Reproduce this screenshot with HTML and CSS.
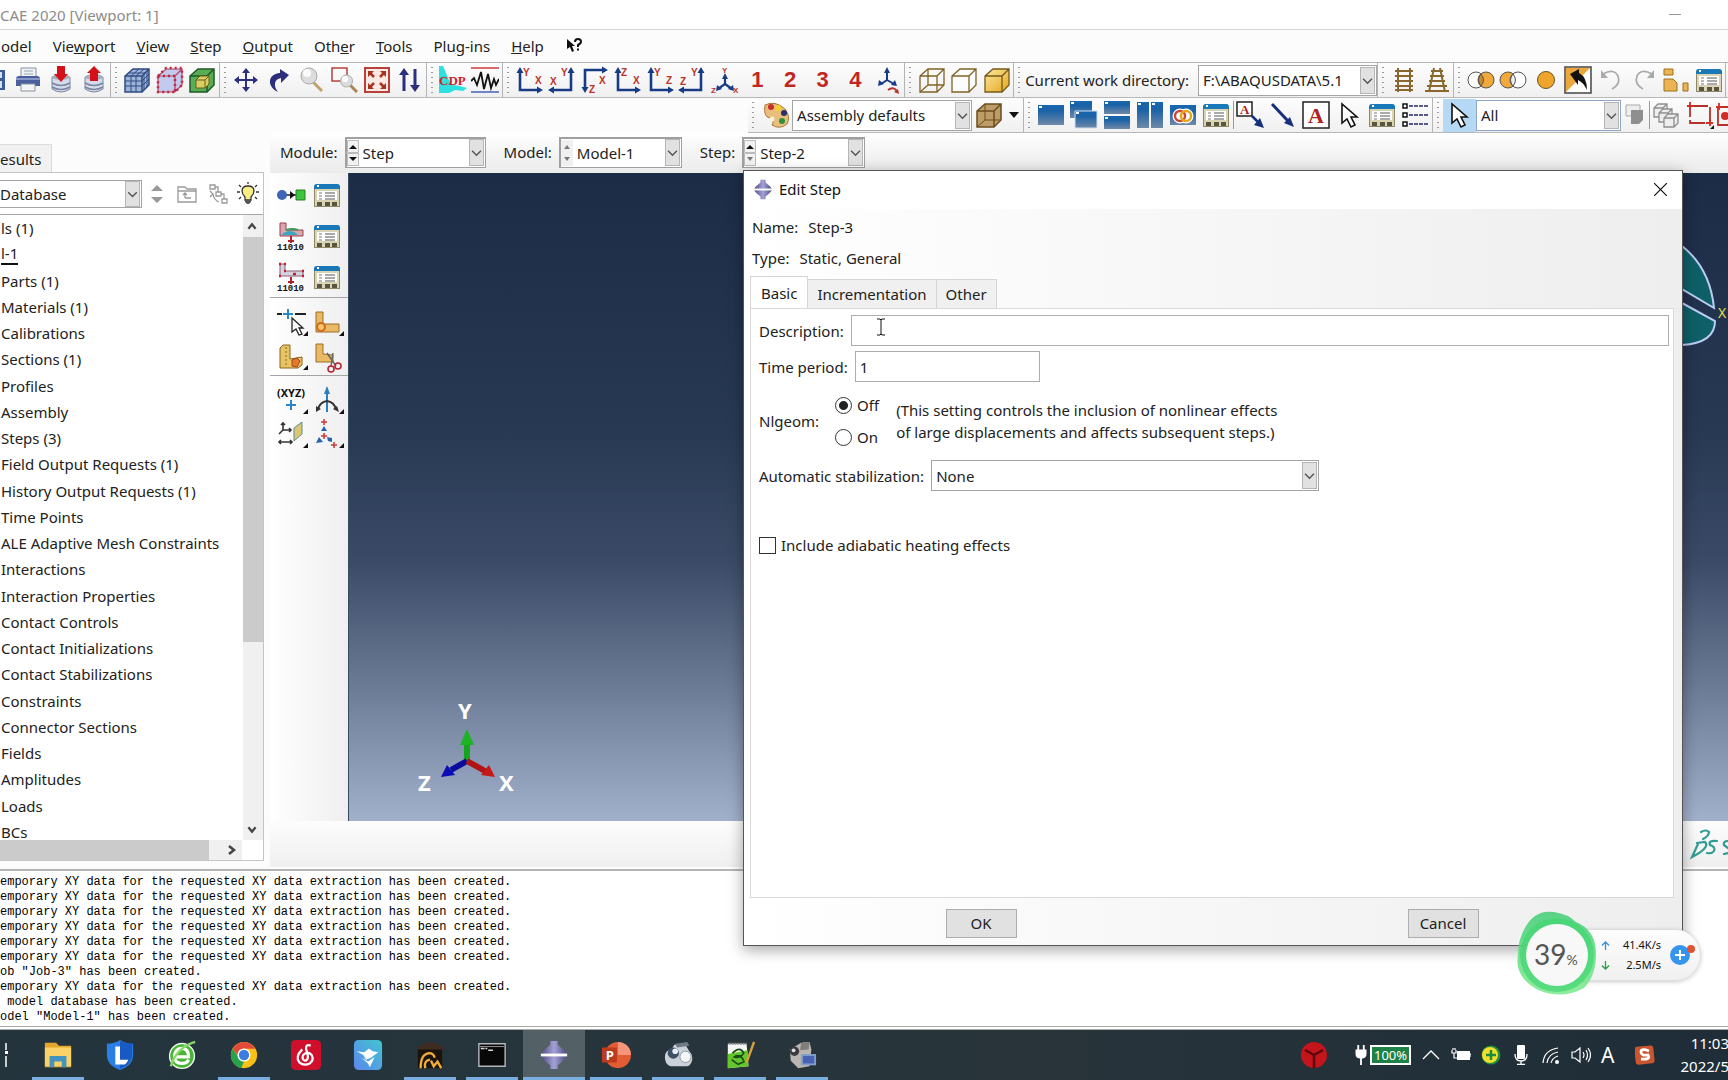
FILE: index.html
```html
<!DOCTYPE html>
<html lang="en">
<head>
    <meta charset="UTF-8">
    <meta name="viewport" content="width=device-width, initial-scale=1.0">
    <title>CAE 2020 [Viewport: 1]</title>
    <link rel="stylesheet" href="styles.css">
</head>
<body>

    <!-- Shared icons -->
    <svg class="sprite" width="0" height="0">
        <linearGradient id="g-blue" x1="0" y1="0" x2="0" y2="1"><stop offset="0" stop-color="#1767b0"/><stop offset=".3" stop-color="#1b62a6"/><stop offset="1" stop-color="#6f89a8"/></linearGradient>
        <linearGradient id="g-gold" x1="0" y1="0" x2="1" y2="1"><stop offset="0" stop-color="#fbe9a0"/><stop offset="1" stop-color="#e5a61c"/></linearGradient>
        <linearGradient id="g-purple" x1="0" x2="1"><stop offset="0" stop-color="#4c4a80"/><stop offset=".5" stop-color="#a3a1d6"/><stop offset="1" stop-color="#4c4a80"/></linearGradient>
        <symbol id="i-chevron" viewBox="0 0 14 28"><path d="M2 12l5 5 5-5" fill="none" stroke="#555" stroke-width="1.6"/></symbol>
        <symbol id="i-table" viewBox="0 0 28 28">
            <path d="M1 7q0-4 4-4h18q4 0 4 4v19H1z" fill="#8e8768"/>
            <path d="M2 8h24v17H2z" fill="#d9d4b4"/><path d="M1 8V6q0-3 3-3h20q3 0 3 3v2z" fill="#1878b8"/>
            <path d="M4 5h2" stroke="#fff" stroke-width="2"/><path d="M4 10h20v9H4z" fill="#fff"/>
            <path d="M6 12h3M6 15h3M6 18h3" stroke="#777"/><path d="M12 12h10M12 15h10M12 18h10" stroke="#555"/>
            <path d="M4 21h5v4H4zM12 21h5v4h-5zM19 21h5v4h-5z" fill="#5a5540"/>
        </symbol>
        <symbol id="i-arrow" viewBox="0 0 28 28"><path d="M7 3v19l5-4 4 8 4-2-4-8h6z" fill="#fff" stroke="#111" stroke-width="1.6"/></symbol>
        <symbol id="i-abaqus" viewBox="0 0 28 32">
            <path d="M10 1h8v4l6 5q4 4 4 6t-4 6l-6 5v4h-8v-4l-6-5q-4-4-4-6t4-6l6-5z" fill="url(#g-purple)"/><path d="M0 14.500h28v3H0z" fill="#fff"/>
        </symbol>
        <symbol id="i-db" viewBox="0 0 28 28">
            <path d="M5 11v12q9 6 18 0V11z" fill="#d4dcec" stroke="#7a86a0"/><path d="M5 17q9 5 18 0M5 21q9 5 18 0" fill="none" stroke="#7a86a0" stroke-width="1.500"/><ellipse cx="14" cy="11" rx="9" ry="3" fill="#a9adbb"/>
        </symbol>
        <symbol id="i-cube" viewBox="0 0 28 28"><path d="M2 10l8-7h16v16l-7 7H2zM2 10h17v16M19 10l7-7"/></symbol>
        <symbol id="i-axes" viewBox="0 0 28 28"><path d="M5 5v19h19" fill="none" stroke="#173c85" stroke-width="2.600"/><path d="M5 1L1.500 7h7zM28 24l-6-3.500v7z" fill="#173c85"/></symbol>
        <symbol id="i-corner" viewBox="0 0 6 6"><path d="M6 0v6H0z" fill="#111"/></symbol>
    </svg>

    <div class="window">
        <header class="title-bar">
            <span>CAE 2020 [Viewport: 1]</span>
            <button class="minimize" aria-label="Minimize"></button>
        </header>

        <nav class="menu-bar">
            <a href="#">odel</a>
            <a href="#">Vie<u>w</u>port</a>
            <a href="#"><u>V</u>iew</a>
            <a href="#"><u>S</u>tep</a>
            <a href="#"><u>O</u>utput</a>
            <a href="#">Oth<u>e</u>r</a>
            <a href="#"><u>T</u>ools</a>
            <a href="#">Plu<u>g</u>-ins</a>
            <a href="#"><u>H</u>elp</a>
            <svg class="help-cursor" viewBox="0 0 18 18"><path d="M2 2v10l3-2 2 5 2-1-2-5h3z" fill="#111"/><path d="M10 5q0-3 3-3t3 2.500q0 2-3 3.500v2M13 11.500v2" fill="none" stroke="#111" stroke-width="2"/></svg>
        </nav>

        <div class="toolbar toolbar-main">
            <button class="tool tool-cut" aria-label="Save"><svg viewBox="0 0 12 28"><path d="M0 4h5v20H0z" fill="#3c5a96"/><path d="M0 6h2v6H0zM0 15h2v7H0z" fill="#d5dff0"/></svg></button>
            <button class="tool" aria-label="Print"><svg viewBox="0 0 28 28"><path d="M7 2h15v9H7z" fill="#eef1f5" stroke="#8a93a5"/><path d="M10 5h9M10 8h9" stroke="#9aa"/><path d="M2 13q0-3 3-3h18q3 0 3 3v7H2z" fill="#4b5f9e"/><path d="M2 13h24" stroke="#8797c9" stroke-width="2"/><path d="M7 18h14v7H7z" fill="#f4f4f4" stroke="#8a93a5"/></svg></button>
            <button class="tool" aria-label="Import"><svg viewBox="0 0 28 28"><use href="#i-db"/><path d="M10 0h8v8h3l-7 8-7-8h3z" fill="#d4111b"/></svg></button>
            <button class="tool" aria-label="Export"><svg viewBox="0 0 28 28"><use href="#i-db"/><path d="M14 0l7 7h-3v8h-8V7H7z" fill="#d4111b"/></svg></button>
            <span class="grip"></span>
            <button class="tool" aria-label="Mesh"><svg viewBox="0 0 28 28"><use href="#i-cube" fill="#9db4da" stroke="#2f4a80" stroke-width="1.500"/><path d="M8 10v16M13 10v16M2 15h17l7-7M2 20h17l7-7M8 10l8-7M13 10l8-7M21 8v16M24 5v16M6 7h17" fill="none" stroke="#2f4a80"/></svg></button>
            <button class="tool" aria-label="Seeds"><svg viewBox="0 0 28 28"><use href="#i-cube" fill="#c2cbee" stroke="#b3405e" stroke-width="1.200"/><path d="M2 10l8-8h16v17l-7 7H2zM2 10h17v16" fill="none" stroke="#c02945" stroke-width="2.500" stroke-dasharray="2 3"/></svg></button>
            <button class="tool" aria-label="Part"><svg viewBox="0 0 28 28"><use href="#i-cube" fill="#58ad55" stroke="#1f5a26" stroke-width="1.500"/><path d="M8 14l4-4h9v8l-4 4H8zM8 14h9v8M17 14l4-4" fill="#d8cf62" stroke="#6b5d1b"/></svg></button>
            <span class="grip"></span>
            <button class="tool" aria-label="Pan"><svg viewBox="0 0 28 28"><path d="M14 5v18M5 14h18" stroke="#2b2f7c" stroke-width="2"/><path d="M14 2l-4 5h8zM14 26l-4-5h8zM2 14l5-4v8zM26 14l-5-4v8z" fill="#2b2f7c"/></svg></button>
            <button class="tool" aria-label="Rotate"><svg viewBox="0 0 28 28"><path d="M13 26C2 21 2 8 15 7V3l9 6-8 8v-5C9 13 8 20 13 26z" fill="#2b2f7c"/></svg></button>
            <button class="tool" aria-label="Magnify"><svg viewBox="0 0 28 28"><path d="M16 16l9 9" stroke="#c0a36a" stroke-width="3"/><circle cx="12" cy="10" r="8" fill="#dcdcdc" stroke="#aaa"/><circle cx="10" cy="7" r="4" fill="#fafafa"/></svg></button>
            <button class="tool" aria-label="Box zoom"><svg viewBox="0 0 28 28"><path d="M2 2h15v13H2z" fill="none" stroke="#b8413c" stroke-width="1.500"/><path d="M20 19l7 7" stroke="#a88755" stroke-width="3"/><circle cx="16.500" cy="15" r="6" fill="#ddd" stroke="#aaa"/><circle cx="15" cy="13" r="3" fill="#fff"/></svg></button>
            <button class="tool" aria-label="Fit view"><svg viewBox="0 0 28 28"><path d="M2 2h24v24H2z" fill="#fbe9e4" stroke="#b8413c" stroke-width="2"/><path d="M6 6l5 5M22 6l-5 5M6 22l5-5M22 22l-5-5" stroke="#a9331f" stroke-width="2.500"/><path d="M5 5h6l-6 6zM23 5h-6l6 6zM5 23h6l-6-6zM23 23h-6l6-6z" fill="#a9331f"/></svg></button>
            <button class="tool" aria-label="Cycle views"><svg viewBox="0 0 28 28"><path d="M9 25V6M20 3v19" stroke="#2b2f7c" stroke-width="3"/><path d="M9 2L4 9h10zM20 26l-5-7h10z" fill="#2b2f7c"/></svg></button>
            <span class="grip"></span>
            <button class="tool" aria-label="CDP"><svg viewBox="0 0 28 28"><path d="M0 0h4l8 19q7 0 16 3l-4 3-8-1-6 3H0z" fill="#2ee0df"/><text class="cdp" x="0" y="19">CDP</text></svg></button>
            <button class="tool" aria-label="Filter"><svg viewBox="0 0 28 28"><path d="M0 2h28" stroke="#cf3b3b" stroke-width="1.500"/><path d="M0 26h28" stroke="#4661b8" stroke-width="1.500"/><path d="M0 15l3-3 3 7 4-13 3 17 4-15 3 14 3-9 2 6 3-6" fill="none" stroke="#111" stroke-width="1.800"/></svg></button>
            <span class="grip"></span>
            <button class="tool" aria-label="XY front"><svg viewBox="0 0 28 28"><use href="#i-axes"/><text class="axis" x="8" y="10">Y</text><text class="axis" x="20" y="18">X</text></svg></button>
            <button class="tool" aria-label="XY back"><svg viewBox="0 0 28 28"><use href="#i-axes" transform="matrix(-1 0 0 1 28 0)"/><text class="axis" x="13" y="10">Y</text><text class="axis" x="2" y="19">X</text></svg></button>
            <button class="tool" aria-label="XZ top"><svg viewBox="0 0 28 28"><use href="#i-axes" transform="matrix(1 0 0 -1 0 28)"/><text class="axis" x="19" y="18">X</text><text class="axis" x="9" y="27">Z</text></svg></button>
            <button class="tool" aria-label="XZ bottom"><svg viewBox="0 0 28 28"><use href="#i-axes"/><text class="axis" x="8" y="10">Z</text><text class="axis" x="20" y="18">X</text></svg></button>
            <button class="tool" aria-label="YZ left"><svg viewBox="0 0 28 28"><use href="#i-axes"/><text class="axis" x="8" y="10">Y</text><text class="axis" x="20" y="18">Z</text></svg></button>
            <button class="tool" aria-label="YZ right"><svg viewBox="0 0 28 28"><use href="#i-axes" transform="matrix(-1 0 0 1 28 0)"/><text class="axis" x="13" y="10">Y</text><text class="axis" x="2" y="19">Z</text></svg></button>
            <button class="tool" aria-label="Isometric"><svg viewBox="0 0 28 28"><path d="M14 11v7l-7 5M14 18l7 5" fill="none" stroke="#173c85" stroke-width="2.200"/><path d="M14 7l-3 6h6zM5 25l1-6 5 4zM23 25l-1-6-5 4z" fill="#173c85"/><text class="axis-small" x="11" y="7">Y</text><text class="axis-small" x="0" y="27">Z</text><text class="axis-small" x="22" y="27">X</text></svg></button>
            <button class="tool view-number">1</button>
            <button class="tool view-number">2</button>
            <button class="tool view-number">3</button>
            <button class="tool view-number">4</button>
            <button class="tool" aria-label="Custom view"><svg viewBox="0 0 28 28"><path d="M13 6v8l-6 4M13 14l7 4" fill="none" stroke="#173c85" stroke-width="2"/><path d="M13 1l-3 6h6zM4 20l1-6 5 4zM23 20l-6-1 4-5z" fill="#173c85"/><path d="M14 24q5-4 9 1" fill="none" stroke="#b8332c" stroke-width="2"/><path d="M25 28l-5-2 4-3z" fill="#b8332c"/></svg></button>
            <span class="grip"></span>
            <button class="tool" aria-label="Wireframe"><svg viewBox="0 0 28 28"><use href="#i-cube" fill="none" stroke="#806225" stroke-width="1.300"/><path d="M10 3v16h16M10 19l-8 7" fill="none" stroke="#806225" stroke-width="1.300"/></svg></button>
            <button class="tool" aria-label="Hidden line"><svg viewBox="0 0 28 28"><use href="#i-cube" fill="#fcfcfc" stroke="#806225" stroke-width="1.300"/></svg></button>
            <button class="tool" aria-label="Shaded"><svg viewBox="0 0 28 28"><use href="#i-cube" fill="url(#g-gold)" stroke="#75591a" stroke-width="1.300"/></svg></button>
            <span class="grip"></span>
            <label class="toolbar-label" for="work-dir">Current work directory:</label>
            <span class="combo combo-dir"><select id="work-dir"><option>F:\ABAQUSDATA\5.1</option></select><svg class="combo-arrow"><use href="#i-chevron"/></svg></span>
            <span class="grip"></span>
            <button class="tool" aria-label="Parallel"><svg viewBox="0 0 28 28"><path d="M8 2v24M20 2v24M5 5h18M5 10h18M5 15h18M5 20h18M5 24h18" stroke="#8a672f" stroke-width="2"/></svg></button>
            <button class="tool" aria-label="Perspective"><svg viewBox="0 0 28 28"><path d="M11 2L6 26M17 2l5 24M8 5h12M7 10h14M6 15h16M4 20h20M2 25h24" stroke="#8a672f" stroke-width="2"/></svg></button>
            <span class="grip"></span>
            <button class="tool" aria-label="Union"><svg viewBox="0 0 28 28"><circle cx="9" cy="14" r="8" fill="#fff" stroke="#555"/><circle cx="19" cy="14" r="8" fill="#f0a93a" stroke="#555"/><path d="M14 8q5 6 0 12-5-6 0-12z" fill="#cd8a2a" stroke="#555"/></svg></button>
            <button class="tool" aria-label="Subtract"><svg viewBox="0 0 28 28"><circle cx="9" cy="14" r="8" fill="#f0a93a" stroke="#555"/><circle cx="19" cy="14" r="8" fill="#fff" stroke="#555"/><path d="M14 8q5 6 0 12-5-6 0-12z" fill="#eee" stroke="#555"/></svg></button>
            <button class="tool" aria-label="Only"><svg viewBox="0 0 28 28"><circle cx="14" cy="14" r="8.500" fill="#f0a42c" stroke="#6d5221"/></svg></button>
            <button class="tool" aria-label="Replace"><svg viewBox="0 0 28 28"><path d="M1 1h26v26H1z" fill="#fff" stroke="#444" stroke-width="1.500"/><path d="M2 2h24L2 26z" fill="#eda63a"/><path d="M6 8l9-5v4q8 4 8 17-4-8-9-10v5z" fill="#111"/></svg></button>
            <button class="tool" aria-label="Undo"><svg viewBox="0 0 28 28"><path d="M6 8q11-6 15 2 3 8-6 13" fill="none" stroke="#a9a9a9" stroke-width="1.700"/><path d="M4 4v8h7z" fill="#a9a9a9"/></svg></button>
            <button class="tool" aria-label="Redo"><svg viewBox="0 0 28 28"><path d="M22 8Q11 2 7 10q-3 8 6 13" fill="none" stroke="#a9a9a9" stroke-width="1.700"/><path d="M24 4v8h-7z" fill="#a9a9a9"/></svg></button>
            <button class="tool" aria-label="Display groups"><svg viewBox="0 0 28 28"><path d="M2 3h9v6H2zM2 13h9l4 4v8H2zM21 17h5v8h-5z" fill="#eab455" stroke="#9b701f"/></svg></button>
            <button class="tool" aria-label="Manager"><svg><use href="#i-table"/></svg></button>
            <span class="edge"></span>
        </div>

        <div class="toolbar toolbar-second">
            <span class="grip"></span>
            <button class="tool" aria-label="Color code"><svg viewBox="0 0 28 28"><path d="M3 4q10-5 20 4 6 8 2 15-7 6-15 1 3-5-2-7-7-1-5-13z" fill="#e9bd7c" stroke="#a8773a"/><circle cx="9" cy="6" r="3" fill="#c92f27"/><circle cx="16" cy="7" r="3" fill="#f2d32b"/><circle cx="22" cy="12" r="3" fill="#2b2f6a"/><circle cx="20" cy="20" r="3" fill="#2f8f3a"/><circle cx="10" cy="18" r="2.500" fill="#f8efd8"/></svg></button>
            <span class="combo combo-color"><select aria-label="Color mapping"><option>Assembly defaults</option></select><svg class="combo-arrow"><use href="#i-chevron"/></svg></span>
            <button class="tool" aria-label="Translucency"><svg viewBox="0 0 28 28"><use href="#i-cube" fill="#bd9c68" stroke="#6b4e1d" stroke-width="1.500"/><path d="M10 3v16h16M10 19l-8 7" fill="none" stroke="#6b4e1d"/></svg></button>
            <button class="tool-drop" aria-label="More"><svg viewBox="0 0 10 6"><path d="M0 0h10L5 6z" fill="#111"/></svg></button>
            <span class="grip"></span>
            <button class="tool" aria-label="Single viewport"><svg viewBox="0 0 28 28"><path d="M1 4h26v20H1z" fill="url(#g-blue)"/><path d="M2 6h3" stroke="#fff" stroke-width="2"/></svg></button>
            <button class="tool" aria-label="Cascade"><svg viewBox="0 0 28 28"><path d="M0 0h22v17H0z" fill="url(#g-blue)"/><path d="M5 10h22v17H5z" fill="url(#g-blue)" stroke="#cfe0ef"/><path d="M1 2h3M6 12h3" stroke="#fff" stroke-width="2"/></svg></button>
            <button class="tool" aria-label="Tile horizontally"><svg viewBox="0 0 28 28"><path d="M1 0h26v13H1z" fill="url(#g-blue)"/><path d="M1 15h26v13H1z" fill="url(#g-blue)"/><path d="M2 2h3M2 17h3" stroke="#fff" stroke-width="2"/></svg></button>
            <button class="tool" aria-label="Tile vertically"><svg viewBox="0 0 28 28"><path d="M1 1h12v26H1z" fill="url(#g-blue)"/><path d="M15 1h12v26H15z" fill="url(#g-blue)"/><path d="M2 3h3M16 3h3" stroke="#fff" stroke-width="2"/></svg></button>
            <button class="tool" aria-label="Link viewports"><svg viewBox="0 0 28 28"><path d="M1 4h26v20H1z" fill="url(#g-blue)"/><g fill="#fff" stroke="#fff" stroke-width="3"><circle cx="11" cy="15" r="6"/><circle cx="17" cy="15" r="6"/></g><circle cx="11" cy="15" r="5" fill="none" stroke="#c9483a" stroke-width="2.500"/><circle cx="17" cy="15" r="5" fill="none" stroke="#e5a61c" stroke-width="2.500"/></svg></button>
            <button class="tool" aria-label="Viewport manager"><svg><use href="#i-table"/></svg></button>
            <span class="divider"></span>
            <button class="tool" aria-label="Arrow text"><svg viewBox="0 0 28 28"><path d="M1 1h15v14H1z" fill="#fff" stroke="#222" stroke-width="1.500"/><text class="letter-small" x="4" y="13">A</text><path d="M16 15l7 7" stroke="#16307e" stroke-width="2.500"/><path d="M28 27l-10-3 6-7z" fill="#16307e"/></svg></button>
            <button class="tool" aria-label="Arrow"><svg viewBox="0 0 28 28"><path d="M3 3l16 17" stroke="#16307e" stroke-width="3"/><path d="M25 26l-10-4 6-6z" fill="#16307e"/></svg></button>
            <button class="tool" aria-label="Text"><svg viewBox="0 0 28 28"><path d="M1 1h26v26H1z" fill="#fff" stroke="#222" stroke-width="1.500"/><text class="letter" x="6" y="22">A</text></svg></button>
            <button class="tool" aria-label="Select annotation"><svg><use href="#i-arrow"/></svg></button>
            <button class="tool" aria-label="Annotation manager"><svg><use href="#i-table"/></svg></button>
            <button class="tool" aria-label="Annotation options"><svg viewBox="0 0 28 28"><path d="M2 3h4v4H2zM2 12h4v4H2zM2 21h4v4H2z" fill="#fff" stroke="#111" stroke-width="1.500"/><path d="M8 5h20M8 14h20M8 23h20" stroke="#222a6c" stroke-width="1.500" stroke-dasharray="4 1"/></svg></button>
            <span class="grip"></span>
            <button class="tool tool-active" aria-label="Select"><svg><use href="#i-arrow"/></svg></button>
            <span class="combo combo-filter"><select aria-label="Selection filter"><option>All</option></select><svg class="combo-arrow"><use href="#i-chevron"/></svg></span>
            <button class="tool tool-narrow" aria-label="Selection options"><svg viewBox="0 0 28 28"><path d="M5 4h14v11H5z" fill="#eee" stroke="#aaa"/><path d="M10 9h12v10l-4 4h-8z" fill="#8f8f8f"/></svg></button>
            <span class="divider"></span>
            <button class="tool" aria-label="Highlight"><svg viewBox="0 0 28 28"><g fill="#eee" stroke="#8f8f8f" stroke-width="1.300"><path d="M2 7l4-4h9v9l-4 4H2zM2 7h9v9M11 7l4-4"/><path d="M7 12l4-4h9v9l-4 4H7zM7 12h9v9M16 12l4-4"/><path d="M12 17l4-4h10v9l-4 4H12zM12 17h10v9M22 17l4-4"/></g></svg></button>
            <button class="tool" aria-label="Drag rectangle"><svg viewBox="0 0 28 28"><path d="M4 5h20v17H4z" fill="none" stroke="#b7312b" stroke-width="1.800" stroke-dasharray="18 3"/><path d="M1 5h7M4 1v7M20 22h7M24 18v7" stroke="#d12c26" stroke-width="1.800"/><path d="M28 24v4h-4z" fill="#111"/></svg></button>
            <button class="tool tool-cut" aria-label="Inside"><svg viewBox="0 0 12 28"><path d="M12 6H2v18h10" fill="none" stroke="#b7312b" stroke-width="1.800"/><path d="M0 6h6M3 2v7" stroke="#d12c26" stroke-width="1.800"/><ellipse cx="9" cy="15" rx="4" ry="4" fill="#d12c26"/></svg></button>
        </div>

        <div class="workspace">
            <aside class="side">
                <div class="side-tabs"><button class="side-tab">esults</button></div>
                <div class="side-body">
                    <div class="side-tools">
                        <span class="combo combo-db"><select aria-label="Database"><option>Database</option></select><svg class="combo-arrow"><use href="#i-chevron"/></svg></span>
                        <button class="side-tool" aria-label="Up or down"><svg viewBox="0 0 24 24"><path d="M6 9l6-6 6 6zM6 15l6 6 6-6z" fill="#999"/></svg></button>
                        <button class="side-tool" aria-label="Parent"><svg viewBox="0 0 24 24"><path d="M3 20V5h7l2 2h9v13zM3 9h18M10 16h6M10 16v-4M8 13l2-2 2 2" fill="none" stroke="#9a9a9a" stroke-width="1.300"/></svg></button>
                        <button class="side-tool" aria-label="Filter tree"><svg viewBox="0 0 24 24"><path d="M4 3h5v4H4zM10 10h5v4h-5zM16 17h5v4h-5zM9 5h3v5M15 12h3v5M4 9l3 3-3 3M7 12q1 6 6 8" fill="none" stroke="#9a9a9a" stroke-width="1.300"/></svg></button>
                        <button class="side-tool" aria-label="Hint"><svg viewBox="0 0 24 24"><path d="M9 15q-3-3-3-6 0-5 6-5t6 5q0 3-3 6v3H9z" fill="#f6ee84" stroke="#333" stroke-width="1.300"/><path d="M9 18h6v2l-2 2h-2l-2-2z" fill="#555"/><path d="M12 0v2M3 3l2 2M21 3l-2 2M1 10h3M23 10h-3M3 17l2-2M21 17l-2-2" stroke="#333" stroke-width="1.300"/></svg></button>
                    </div>
                    <div class="tree-area">
                        <ul class="tree">
                            <li>ls (1)</li>
                            <li><span class="current">l-1</span></li>
                            <li>Parts (1)</li>
                            <li>Materials (1)</li>
                            <li>Calibrations</li>
                            <li>Sections (1)</li>
                            <li>Profiles</li>
                            <li>Assembly</li>
                            <li>Steps (3)</li>
                            <li>Field Output Requests (1)</li>
                            <li>History Output Requests (1)</li>
                            <li>Time Points</li>
                            <li>ALE Adaptive Mesh Constraints</li>
                            <li>Interactions</li>
                            <li>Interaction Properties</li>
                            <li>Contact Controls</li>
                            <li>Contact Initializations</li>
                            <li>Contact Stabilizations</li>
                            <li>Constraints</li>
                            <li>Connector Sections</li>
                            <li>Fields</li>
                            <li>Amplitudes</li>
                            <li>Loads</li>
                            <li>BCs</li>
                        </ul>
                        <div class="scroll-v">
                            <svg viewBox="0 0 20 22"><path d="M6 14l4-5 4 5" fill="none" stroke="#444" stroke-width="2.500"/></svg>
                            <div class="thumb-v"></div>
                            <svg viewBox="0 0 20 22"><path d="M6 9l4 5 4-5" fill="none" stroke="#444" stroke-width="2.500"/></svg>
                        </div>
                    </div>
                    <div class="scroll-h">
                        <div class="thumb-h"></div>
                        <svg viewBox="0 0 20 20"><path d="M8 6l5 4-5 4" fill="none" stroke="#444" stroke-width="2.500"/></svg>
                    </div>
                </div>
            </aside>

            <main class="main">
                <div class="context-bar">
                    <label for="module">Module:</label>
                    <span class="combo combo-spin combo-module"><svg class="spin" viewBox="0 0 12 26"><path d="M.5.5h11v12H.5zM.5 13.500h11v12H.5z" fill="#f2f2f2" stroke="#bbb"/><path d="M2 9l4-4 4 4zM2 17l4 4 4-4z" fill="#111"/></svg><select id="module"><option>Step</option></select><svg class="combo-arrow"><use href="#i-chevron"/></svg></span>
                    <label for="model">Model:</label>
                    <span class="combo combo-spin combo-model"><svg class="spin" viewBox="0 0 12 26"><path d="M0 0h12v26H0z" fill="#f0f0f0"/><path d="M3 9l3-4 3 4zM3 17l3 4 3-4z" fill="#777"/></svg><select id="model"><option>Model-1</option></select><svg class="combo-arrow"><use href="#i-chevron"/></svg></span>
                    <label for="step">Step:</label>
                    <span class="combo combo-spin combo-model"><svg class="spin" viewBox="0 0 12 26"><path d="M.5.5h11v12H.5zM.5 13.500h11v12H.5z" fill="#f2f2f2" stroke="#bbb"/><path d="M2 9l4-4 4 4z" fill="#111"/><path d="M3 17l3 4 3-4z" fill="#777"/></svg><select id="step"><option>Step-2</option></select><svg class="combo-arrow"><use href="#i-chevron"/></svg></span>
                </div>

                <div class="canvas-row">
                    <div class="toolbox">
                        <div class="tool-grid tool-grid-wide">
                            <button aria-label="Create step"><svg viewBox="0 0 28 28"><path d="M5 14h16" stroke="#222" stroke-width="1.500"/><circle cx="5" cy="14" r="5" fill="#3f63b5"/><path d="M13 10l5 4-5 4z" fill="#111"/><path d="M19 9h9v10h-9z" fill="#3ec53c" stroke="#2b7d2a"/></svg></button>
                            <button aria-label="Step manager"><svg><use href="#i-table"/></svg></button>
                            <button aria-label="Create field output"><svg viewBox="0 0 28 28"><path d="M3 1h6v7h17v6H3z" fill="#d9a7ae" stroke="#99404c"/><path d="M4 13q9-8 17 0z" fill="#3aa6c6"/><path d="M9 8q7-2 12 0" stroke="#3f9a5a" stroke-width="2" fill="none"/><path d="M14 14v7M11 19h6" stroke="#b0202c" stroke-width="2"/><text class="bits" x="0" y="28">11010</text></svg></button>
                            <button aria-label="Field output manager"><svg><use href="#i-table"/></svg></button>
                            <button aria-label="Create history output"><svg viewBox="0 0 28 28"><path d="M3 1h5v7h18v5H3z" fill="#d3d3e2" stroke="#8a5f73"/><path d="M2 1h2M7 1h2M2 13h2M25 8h2M25 13h2M16 11h3M7 8h2" stroke="#c0202c" stroke-width="2.500"/><path d="M14 14v7M11 19h6" stroke="#b0202c" stroke-width="2"/><text class="bits" x="0" y="28">11010</text></svg></button>
                            <button aria-label="History output manager"><svg><use href="#i-table"/></svg></button>
                        </div>
                        <div class="tool-grid">
                            <button aria-label="Pick"><svg viewBox="0 0 28 28"><path d="M0 6h5M18 6h11" stroke="#222" stroke-width="2"/><path d="M6 6h10M11 1v10" stroke="#2a86c8" stroke-width="2"/><path d="M15 10v14l4-3 3 6 3-1-3-6h4z" fill="#fff" stroke="#222" stroke-width="1.300"/></svg><svg class="flyout"><use href="#i-corner"/></svg></button>
                            <button aria-label="Partition"><svg viewBox="0 0 28 28"><path d="M3 4h7v12h16v8H3z" fill="#e9b964" stroke="#9a6f28"/><circle cx="8" cy="19" r="4" fill="#f4c36a" stroke="#d06a1c" stroke-width="2"/></svg><svg class="flyout"><use href="#i-corner"/></svg></button>
                            <button aria-label="Cell"><svg viewBox="0 0 28 28"><path d="M3 6l3-3h7v14l12-2v8l-4 3H3z" fill="#e8c362" stroke="#8a6420"/><path d="M9 5v20" stroke="#8a6420" stroke-dasharray="2 2"/><path d="M15 18l5-2 3 3-3 6-5-1z" fill="#e27a2c" stroke="#a8441c"/></svg><svg class="flyout"><use href="#i-corner"/></svg></button>
                            <button aria-label="Cut"><svg viewBox="0 0 28 28"><path d="M3 2h7v10l10 1v7H3z" fill="#e9b964" stroke="#9a6f28"/><path d="M14 11l9 13M20 11l-2 13" stroke="#666" stroke-width="1.500"/><circle cx="25" cy="24" r="3" fill="none" stroke="#b8202c" stroke-width="1.500"/><circle cx="18" cy="27" r="3" fill="none" stroke="#b8202c" stroke-width="1.500"/></svg></button>
                        </div>
                        <div class="tool-grid">
                            <button aria-label="Datum point"><svg viewBox="0 0 28 28"><text class="xyz" x="0" y="11">(XYZ)</text><path d="M9 19h10M14 14v10" stroke="#2a86c8" stroke-width="2"/></svg><svg class="flyout"><use href="#i-corner"/></svg></button>
                            <button aria-label="Datum axis"><svg viewBox="0 0 28 28"><path d="M14 2v24" stroke="#2a7fc0" stroke-width="2"/><path d="M14 0l-3 8h6z" fill="#2a7fc0"/><path d="M14 15q-7 1-9 8M14 15q7 1 9 8" fill="none" stroke="#333" stroke-width="2"/><path d="M3 26v-6l5 3zM26 26l-6-3 4-3z" fill="#333"/></svg><svg class="flyout"><use href="#i-corner"/></svg></button>
                            <button aria-label="Datum plane"><svg viewBox="0 0 28 28"><path d="M6 3v7h8M6 10l-4 4M2 22h13M4 20l-2 2 2 2M13 20l2 2-2 2M12 8l2 2-2 2M4 5l2-2 2 2" fill="none" stroke="#333" stroke-width="1.600"/><path d="M17 8l8-6v12l-8 7z" fill="#ddc66e" stroke="#5b8a9a"/></svg><svg class="flyout"><use href="#i-corner"/></svg></button>
                            <button aria-label="Datum CSYS"><svg viewBox="0 0 28 28"><path d="M8 2h6M11 -1v6M8 16h6M11 13v6M18 25h6M21 22v6" stroke="#cf3636" stroke-width="1.500"/><path d="M8 11l3-5 3 5zM3 23l3-6 4 5zM15 21l-1-4 5 1v4z" fill="#2564ad"/></svg><svg class="flyout"><use href="#i-corner"/></svg></button>
                        </div>
                    </div>

                    <div class="viewport">
                        <svg class="triad" viewBox="0 0 110 100">
                            <path d="M54 64V44" stroke="#17a41d" stroke-width="6"/><path d="M54 32l-7 16h14z" fill="#1cb424"/>
                            <path d="M54 64l-16 9" stroke="#0a0c9c" stroke-width="6"/><path d="M28 80l6-12 8 10z" fill="#0a0cb4"/>
                            <path d="M54 64l18 10" stroke="#b01414" stroke-width="6"/><path d="M82 80l-6-12-8 10z" fill="#c81818"/>
                            <text x="45" y="22">Y</text><text x="5" y="94">Z</text><text x="86" y="94">X</text>
                        </svg>
                        <svg class="compass" viewBox="0 0 46 110">
                            <path d="M0 8q28 22 32 62L0 51z" fill="#0f5f68" stroke="#b9cdf3" stroke-width="2"/>
                            <path d="M0 65l33 18q0 22-33 24z" fill="#0f5f68" stroke="#b9cdf3" stroke-width="2"/>
                            <text x="36" y="80">X</text>
                        </svg>
                    </div>
                </div>

                <div class="prompt">
                    <svg class="logo" viewBox="0 0 40 32"><g fill="none" stroke="#2f9c94" stroke-width="2.200" stroke-linecap="round"><path d="M13 4q5-3 8 0 0 4-6 7M9 15l8-1q3 3-1 7-4 4-12 8l6-13"/><path d="M29 13q-9-1-7 4 6 2 4 6-2 3-7 2"/><path d="M40 13q-5 0-4 4l4 3M36 26l4-1"/></g></svg>
                </div>
            </main>
        </div>

        <div class="log">
            <p>emporary XY data for the requested XY data extraction has been created.</p>
            <p>emporary XY data for the requested XY data extraction has been created.</p>
            <p>emporary XY data for the requested XY data extraction has been created.</p>
            <p>emporary XY data for the requested XY data extraction has been created.</p>
            <p>emporary XY data for the requested XY data extraction has been created.</p>
            <p>emporary XY data for the requested XY data extraction has been created.</p>
            <p>ob "Job-3" has been created.</p>
            <p>emporary XY data for the requested XY data extraction has been created.</p>
            <p> model database has been created.</p>
            <p>odel "Model-1" has been created.</p>
        </div>
    </div>

    <form class="dialog">
        <div class="dialog-title">
            <svg class="dialog-icon"><use href="#i-abaqus"/></svg>
            <span>Edit Step</span>
            <button type="button" class="close" aria-label="Close"><svg viewBox="0 0 14 14"><path d="M0 0l14 14M14 0L0 14" stroke="#111" stroke-width="1.300"/></svg></button>
        </div>
        <div class="dialog-body">
            <div class="info"><span>Name:</span><span>Step-3</span></div>
            <div class="info"><span>Type:</span><span>Static, General</span></div>

            <div class="tabs">
                <button type="button" class="tab tab-on">Basic</button>
                <button type="button" class="tab">Incrementation</button>
                <button type="button" class="tab">Other</button>
            </div>

            <div class="panel">
                <div class="field">
                    <label for="description">Description:</label>
                    <input class="text-box text-wide" type="text" id="description">
                </div>
                <div class="field">
                    <label for="period">Time period:</label>
                    <input class="text-box" type="text" id="period" value="1">
                </div>
                <div class="field nlgeom">
                    <span>Nlgeom:</span>
                    <div class="radios">
                        <label><input type="radio" name="nlgeom" checked>Off</label>
                        <label><input type="radio" name="nlgeom">On</label>
                    </div>
                    <p class="note">(This setting controls the inclusion of nonlinear effects<br>of large displacements and affects subsequent steps.)</p>
                </div>
                <div class="field">
                    <label for="stabilization">Automatic stabilization:</label>
                    <span class="combo combo-stab"><select id="stabilization"><option>None</option></select><svg class="combo-arrow"><use href="#i-chevron"/></svg></span>
                </div>
                <label class="check"><input type="checkbox">Include adiabatic heating effects</label>
            </div>

            <div class="dialog-buttons">
                <button type="button">OK</button>
                <button type="button">Cancel</button>
            </div>
        </div>
        <svg class="ibeam" viewBox="0 0 8 18"><path d="M0 1h3l1 1 1-1h3M4 2v14M0 17h3l1-1 1 1h3" fill="none" stroke="#111"/></svg>
    </form>

    <!-- Memory / network widget -->
    <div class="meter">
        <div class="speeds">
            <div><svg viewBox="0 0 10 10"><path d="M5 10V1M1 5l4-4 4 4" fill="none" stroke="#3c93dd" stroke-width="1.500"/></svg><span>41.4K/s</span></div>
            <div><svg viewBox="0 0 10 10"><path d="M5 0v9M1 5l4 4 4-4" fill="none" stroke="#2fa04d" stroke-width="1.500"/></svg><span>2.5M/s</span></div>
        </div>
        <svg class="plus" viewBox="0 0 26 26"><circle cx="11" cy="13" r="10" fill="#3594ee"/><path d="M6 13h10M11 8v10" stroke="#fff" stroke-width="2"/><circle cx="22" cy="7" r="4" fill="#e2532f"/></svg>
        <div class="ball">
            <svg viewBox="0 0 84 86"><defs><linearGradient id="g-ball" x1="0" y1="0" x2="0" y2="1"><stop offset="0" stop-color="#3fcd74"/><stop offset="1" stop-color="#7bea8c"/></linearGradient></defs><path d="M8 25Q18 0 40 3q14 2 22 10 20 8 20 32 0 22-12 34-22 12-46 2Q0 68 4 46q0-12 4-21z" fill="url(#g-ball)" opacity=".85"/><circle cx="43" cy="46" r="37" fill="#42d671" opacity=".7"/><circle cx="43" cy="46" r="31" fill="#f7f8f7"/></svg>
            <span class="percent">39<small>%</small></span>
        </div>
    </div>

    <footer class="taskbar">
        <div class="apps">
            <button class="app-cut" aria-label="Task view"><svg viewBox="0 0 10 32"><path d="M6 4v7M6 17v11" stroke="#fff" stroke-width="1.500"/><path d="M5 12h3v3H5z" fill="#fff"/></svg></button>
            <button class="app running" aria-label="Explorer"><svg viewBox="0 0 32 32"><path d="M2 3h12l3 3h13v23H2z" fill="#e3a72e"/><path d="M2 8h28v20H2z" fill="#fad26a"/><path d="M7 29V17h18v12h-5v-6h-8v6z" fill="#4594bd"/></svg></button>
            <button class="app" aria-label="Lenovo"><svg viewBox="0 0 32 32"><path d="M16 0q6 4 14 4v12q0 11-14 16Q2 27 2 16V4q8 0 14-4z" fill="#2a7fe6"/><path d="M16 1q6 3 13 3v12q0 10-13 15z" fill="#185ac4"/><path d="M11 7h5v14h9q-2 4-4 5H11z" fill="#fff"/></svg></button>
            <button class="app" aria-label="Browser"><svg viewBox="0 0 32 32"><circle cx="16" cy="17" r="14" fill="#f2faee"/><circle cx="16" cy="17" r="12.500" fill="#46b435"/><path d="M9 18h14q0-9-7-9t-8 8q0 8 8 8 5 0 7-4" fill="none" stroke="#fff" stroke-width="3.500"/><path d="M4 28Q10 8 30 2" stroke="#8bd96b" stroke-width="2.500" fill="none"/></svg></button>
            <button class="app running" aria-label="Chrome"><svg viewBox="0 0 32 32"><circle cx="16" cy="16" r="14" fill="#fbc116"/><path d="M4 9a14 14 0 0 1 24 0H16z" fill="#e04b3a"/><path d="M4 9l8 12 4 2-3 7A14 14 0 0 1 4 9z" fill="#2aa24c"/><path d="M4 9q12-8 24 0H16q-5 0-6 8z" fill="#e04b3a"/><circle cx="16" cy="16" r="7" fill="#fff"/><circle cx="16" cy="16" r="5.500" fill="#3b7de0"/></svg></button>
            <button class="app" aria-label="Music"><svg viewBox="0 0 32 32"><rect x="0" y="0" width="32" height="32" rx="5" fill="#cf0f2c"/><path d="M21 6q-5-2-5 3l2 8q0 5-3 5-4-1-2-6 5-5 9 0 3 5-2 9-6 3-11-1-5-6 3-14" fill="none" stroke="#fff" stroke-width="2.400"/></svg></button>
            <button class="app" aria-label="Notes"><svg viewBox="0 0 32 32"><defs><linearGradient id="g-notes" x1="0" x2="1" y1="1" y2="0"><stop offset="0" stop-color="#5c86ee"/><stop offset="1" stop-color="#42c5d0"/></linearGradient></defs><rect x="1" y="0" width="30" height="32" rx="5" fill="url(#g-notes)"/><path d="M4 12l8 1 5-4 4 3 6 1-8 6-5 2-3-5zM9 19l7 4 7-5-5 11-2-4z" fill="#fff"/></svg></button>
            <button class="app running" aria-label="Game"><svg viewBox="0 0 32 32"><path d="M3 8h26v22H3z" fill="#1d130d"/><path d="M2 8l11-6 6 1 11 4v3H2z" fill="#3e2b22"/><path d="M6 30q0-15 9-16 5 0 6 5M11 30q-2-8 5-9M17 22l3 6 4-5 4 7" fill="none" stroke="#efae3a" stroke-width="2.500"/></svg></button>
            <button class="app running" aria-label="Console"><svg viewBox="0 0 32 32"><path d="M2 4h28v24H2z" fill="#080808" stroke="#b4b8bb" stroke-width="1.500"/><path d="M3 7h26" stroke="#999"/><path d="M4 9h4M9 9h2M12 11h5" stroke="#ddd" stroke-width="1.500"/></svg></button>
            <button class="app running active" aria-label="Abaqus"><svg><use href="#i-abaqus"/></svg></button>
            <button class="app running" aria-label="PowerPoint"><svg viewBox="0 0 32 32"><circle cx="18" cy="16" r="14" fill="#e25c34"/><path d="M18 2a14 14 0 0 1 14 14H18z" fill="#f59579"/><rect x="1" y="8" width="16" height="16" rx="1" fill="#bb3b1c"/><text class="ppt" x="5" y="21">P</text></svg></button>
            <button class="app running" aria-label="Recorder"><svg viewBox="0 0 32 32"><path d="M2 18q0-7 7-8l3-5h12l4 7q4 3 3 10-2 6-6 6H8q-6-2-6-10z" fill="#cbd1d8"/><circle cx="11" cy="14" r="6" fill="#3e5066"/><circle cx="13" cy="12" r="3" fill="#eef"/><circle cx="24" cy="18" r="6" fill="#f4f5f7" stroke="#8a94a0"/><path d="M13 4l13-2 2 4-13 2z" fill="#6e7a86"/></svg></button>
            <button class="app running" aria-label="Editor"><svg viewBox="0 0 32 32"><path d="M3 4h20l2 24-22 2z" fill="#f5f7f2"/><path d="M3 15l21-4 1 17-22 2z" fill="#63c62a"/><path d="M4 4h19" stroke="#888" stroke-width="2" stroke-dasharray="2 1"/><path d="M8 14q8-8 12 0-4 6-10 4 6-4 10 4M7 21l7 5 7-3" fill="none" stroke="#1b4a14" stroke-width="1.800"/><path d="M31 2l-8 22" stroke="#d6a33c" stroke-width="2.500"/></svg></button>
            <button class="app running" aria-label="Camcorder"><svg viewBox="0 0 32 32"><path d="M3 10l12-7 9-1 2 8-2 18-12 2-8-8z" fill="#b9b6b1"/><path d="M15 3l9-1-1 8-9 1z" fill="#807d7a"/><circle cx="8" cy="12" r="5" fill="#3a3a40"/><circle cx="7" cy="11" r="2" fill="#dfe3ea"/><path d="M15 15h16v12H15z" fill="#7fa0cd"/><path d="M17 17h12v8H17z" fill="#4a62b4"/></svg></button>
        </div>

        <div class="tray">
            <svg class="tray-red" viewBox="0 0 28 28"><circle cx="14" cy="14" r="13" fill="#c4141c"/><path d="M14 27V14M14 14L5 9M14 14l9-5" stroke="#5a060a" stroke-width="2.500"/></svg>
            <div class="battery">
                <svg viewBox="0 0 14 24"><path d="M4 1v6M10 1v6" stroke="#fff" stroke-width="2"/><path d="M1 6h12v5q0 5-6 5t-6-5z" fill="#fff"/><path d="M7 15v8" stroke="#fff" stroke-width="2"/></svg>
                <span>100%</span>
            </div>
            <svg viewBox="0 0 20 20"><path d="M2 14l8-8 8 8" fill="none" stroke="#fff" stroke-width="1.300"/></svg>
            <svg viewBox="0 0 20 20"><path d="M6 6h13v9H6z" fill="#fff"/><path d="M19 9h1v3M1 5v3h4V5M2 5V3M4 5V3M3 8v5h3" fill="none" stroke="#fff" stroke-width="1.200"/></svg>
            <svg viewBox="0 0 20 20"><circle cx="10" cy="10" r="9.500" fill="#1e8f3e"/><circle cx="9" cy="10" r="8" fill="#f2df2c"/><path d="M5 10h10M10 5v10" stroke="#1c8a3c" stroke-width="2.500"/></svg>
            <svg viewBox="0 0 20 20"><rect x="6" y="0" width="8" height="14" rx="1" fill="#fff"/><path d="M4 9q0 7 6 7t6-7M10 16v4M6 19.500h8" fill="none" stroke="#fff" stroke-width="1.300"/></svg>
            <svg viewBox="0 0 20 20"><g fill="none" stroke="#fff" stroke-width="1.200"><path d="M2 18Q3 5 17 3"/><path d="M6 18q1-9 11-11"/><path d="M10 18q1-5 7-7"/></g><circle cx="16" cy="17" r="2" fill="#fff"/></svg>
            <svg viewBox="0 0 20 20"><path d="M1 7h3l5-4v14l-5-4H1zM12 7q2 3 0 6M15 5q3 5 0 10M17 3q5 7 0 14" fill="none" stroke="#fff" stroke-width="1.200"/></svg>
            <span class="ime">A</span>
            <svg class="sogou" viewBox="0 0 20 20"><rect x="0" y="1" width="19" height="18" rx="3" fill="#c9562f" transform="rotate(-6 10 10)"/><path d="M14 6Q6 3 6 7t7 3q3 5-7 4" fill="none" stroke="#fff" stroke-width="2.800"/></svg>
            <div class="clock"><span>11:03</span><span>2022/5</span></div>
        </div>
    </footer>

</body>
</html>
```
FILE: styles.css
```css
body {
    margin: 0;
    height: 100vh;
    display: flex;
    flex-direction: column;
    overflow: hidden; /* the desktop never scrolls */
    background: #fcfcfc;
    color: #222;
    font-family: "Noto Sans", "Open Sans", sans-serif;
    font-size: 15px;
    line-height: 20px;
}

button, input, select {
    font: inherit;
    color: inherit;
}

button {
    padding: 0;
    border: 0;
    background: none;
}

svg {
    display: block;
    flex: none;
}

.sprite {
    position: absolute;
}

.window {
    flex: 1;
    min-height: 0;
    display: flex;
    flex-direction: column;
}

/* Title and menu */
.title-bar {
    height: 29px;
    display: flex;
    align-items: center;
    justify-content: space-between;
    border-bottom: 1px solid #d4d4d4;
    background: #fff;
    color: #8c8c8c;
}

.minimize {
    width: 12px;
    height: 1px;
    margin-right: 47px;
    background: #999;
}

.menu-bar {
    height: 32px;
    display: flex;
    align-items: center;
    gap: 21px;
    padding-left: 1px;
}

.menu-bar a {
    color: #222;
    text-decoration: none;
}

.help-cursor {
    width: 18px;
    height: 18px;
}

/* Toolbars */
.toolbar {
    display: flex;
    align-items: center;
    box-sizing: border-box;
    height: 35px;
    border-bottom: 1px solid #b9b9b9;
    background: linear-gradient(#fdfdfd, #f0f0f0);
}

.toolbar-main {
    border-top: 1px solid #b4b4b4;
    height: 36px;
}

.toolbar-second {
    margin-left: 748px;
}

.toolbar-second .grip:first-child {
    border-left: 0;
}

.tool {
    flex: 1 1 32px;
    min-width: 0;
    display: flex;
    align-items: center;
    justify-content: center;
}

.tool svg {
    width: 28px;
    height: 28px;
}

.tool-cut {
    flex: 0 0 12px;
}

.tool-cut svg {
    width: 12px;
}

.tool-narrow {
    flex: 0 0 28px;
}

.tool-active {
    height: 33px;
    background: #b5d9f5;
}

.tool-drop {
    width: 18px;
}

.tool-drop svg {
    width: 10px;
    height: 6px;
    margin-left: 4px;
}

.view-number {
    color: #c2271f;
    font: bold 22px "Liberation Sans", sans-serif;
}

.grip {
    flex: none;
    box-sizing: border-box;
    width: 11px;
    height: 34px;
    border-left: 1px solid #b4b4b4;
    background: radial-gradient(circle, #999 1px, transparent 1px) 1px 7px / 8px 5px repeat-y content-box;
}

.divider {
    width: 1px;
    height: 28px;
    background: #999;
}

.edge {
    width: 2px;
    height: 34px;
    border-left: 1px solid #b4b4b4;
}

.toolbar-label {
    margin: 0 9px 0 1px;
    white-space: nowrap;
}

.cdp {
    fill: #d0222a;
    font: bold 13px "Liberation Serif", serif;
}

.axis {
    fill: #bb3327;
    font: bold 10px "Liberation Sans", sans-serif;
}

.axis-small {
    fill: #bb3327;
    font: bold 8px "Liberation Sans", sans-serif;
}

.letter, .letter-small {
    fill: #b31f22;
    font: bold 22px "Liberation Serif", serif;
}

.letter-small {
    font-size: 13px;
}

/* Combo boxes */
.combo {
    display: grid;
    flex: none;
    box-sizing: border-box;
    height: 31px;
    border: 1px solid #a5a5a5;
    background: #fff;
}

.combo > * {
    grid-area: 1 / 1;
}

.combo select {
    appearance: none;
    min-width: 0;
    padding: 0 16px 0 4px;
    border: 0;
    background: none;
}

.combo-arrow {
    justify-self: end;
    align-self: center;
    box-sizing: border-box;
    width: 15px;
    height: 27px;
    margin-right: 1px;
    border: 1px solid #b5b5b5;
    background: #e1e1e1;
    pointer-events: none;
}

.combo-spin {
    border: 2px solid #a0a0a0;
    border-right-width: 1px;
    border-bottom-width: 1px;
}

.combo-spin select {
    padding-left: 16px;
}

.spin {
    width: 12px;
    height: 26px;
    align-self: center;
}

.combo-dir {
    width: 179px;
}

.combo-color {
    width: 180px;
}

.combo-filter {
    width: 145px;
    border-color: #8fa6c4;
}

.combo-db {
    width: 146px;
    margin-left: -4px;
    height: 28px;
}

.combo-db select {
    padding-left: 3px;
}

.combo-db .combo-arrow {
    height: 26px;
}

.combo-module {
    width: 141px;
}

.combo-model {
    width: 123px;
}

.combo-stab {
    width: 388px;
}

/* Model tree */
.workspace {
    flex: 1;
    min-height: 0;
    display: flex;
}

.side {
    width: 264px;
    margin-bottom: 8px;
    display: flex;
    flex-direction: column;
}

.side-tabs {
    display: flex;
    align-items: flex-end;
    height: 39px;
}

.side-tab {
    height: 28px;
    padding: 0 10px 0 0;
    border: 1px solid #dcdcdc;
    border-width: 1px 1px 0 0;
    background: #f1f1f1;
}

.side-body {
    flex: 1;
    min-height: 0;
    display: flex;
    flex-direction: column;
    border: 1px solid #c4c4c4;
    border-left: 0;
    background: #fff;
}

.side-tools {
    display: flex;
    align-items: center;
    height: 42px;
    box-sizing: border-box;
    border-bottom: 1px solid #a8a8a8;
}

.side-tool {
    flex: 1;
}

.side-tool svg {
    width: 24px;
    height: 24px;
    margin: 0 auto;
}

.tree-area {
    flex: 1;
    min-height: 0;
    display: flex;
    overflow: hidden;
}

.tree {
    flex: 1;
    display: flex;
    flex-direction: column;
    margin: 0 0 -5px;
    padding: 0 0 0 1px;
    list-style: none;
    white-space: nowrap;
}

.tree li {
    flex: 1;
    display: flex;
    align-items: center;
}

.current {
    border-bottom: 2px solid #111;
}

.scroll-v {
    width: 20px;
    display: flex;
    flex-direction: column;
    background: #f0f0f0;
}

.scroll-v svg {
    width: 18px;
    height: 22px;
}

.thumb-v {
    flex: 1;
    margin-bottom: 176px;
    background: #cbcbcb;
}

.scroll-h {
    display: flex;
    height: 20px;
    padding-right: 21px;
}

.thumb-h {
    flex: 1;
    background: #cbcbcb;
}

.scroll-h svg {
    width: 20px;
    height: 20px;
    padding: 0 1px 0 12px;
    background: #f0f0f0;
}

/* Main area */
.main {
    flex: 1;
    min-width: 0;
    display: flex;
    flex-direction: column;
    margin-left: 6px;
}

.context-bar {
    display: flex;
    align-items: center;
    box-sizing: border-box;
    height: 40px;
    padding: 0 0 2px 10px;
    background: linear-gradient(#fefefe, #ebebeb);
}

.context-bar .combo {
    margin: 0 18px 0 7px;
}

.canvas-row {
    flex: 1;
    min-height: 0;
    display: flex;
}

.toolbox {
    width: 78px;
    background: linear-gradient(90deg, #fff, #efefef);
}

.tool-grid {
    display: grid;
    grid-template-columns: 36px 36px;
    grid-auto-rows: 34px;
    padding: 7px 0 2px 3px;
    border-bottom: 1px solid #a5a5a5;
}

.tool-grid-wide {
    grid-auto-rows: 41px;
    padding: 1px 0 0 3px;
}

.tool-grid:last-child {
    border-bottom: 0;
}

.tool-grid button {
    position: relative;
    display: flex;
    align-items: center;
    justify-content: center;
}

.tool-grid svg {
    width: 28px;
    height: 28px;
    overflow: visible;
}

.tool-grid .flyout {
    position: absolute;
    right: 1px;
    bottom: 3px;
    width: 5px;
    height: 5px;
}

.bits {
    fill: #111;
    font: bold 9px "Liberation Mono", monospace;
}

.xyz {
    fill: #111;
    font: bold 11px "Noto Sans", sans-serif;
}

.viewport {
    flex: 1;
    position: relative;
    border-left: 1px solid #3c4a60;
    background: linear-gradient(#1c2b46, #283954 40%, #3b4b67 60%, #6d7c97 80%, #a2b1cb);
}

.triad {
    position: absolute;
    left: 64px;
    bottom: 24px;
    width: 110px;
    height: 100px;
    fill: #fff;
    font: bold 22px "Noto Sans", sans-serif;
}

.compass {
    position: absolute;
    right: 0;
    top: 65px;
    width: 46px;
    height: 110px;
    fill: #e3df4b;
    font: 14px "Noto Sans", sans-serif;
}

.prompt {
    height: 46px;
    display: flex;
    align-items: center;
    justify-content: flex-end;
    background: linear-gradient(#fdfdfd, #efefef);
    border-bottom: 2px solid #fff;
}

.logo {
    width: 40px;
    height: 32px;
}

.log {
    box-sizing: border-box;
    height: 161px;
    padding-top: 4px;
    border-top: 2px solid #b4b4b4;
    border-bottom: 4px double #a9a9a9;
    background: #fff;
    color: #000;
    font: 12px/15px "Liberation Mono", monospace;
}

.log p {
    margin: 0;
    white-space: pre;
}

/* Edit Step dialog */
.dialog {
    position: absolute;
    left: 743px;
    right: 45px;
    top: 170px;
    bottom: 134px;
    display: flex;
    flex-direction: column;
    border: 1px solid #555;
    background: #fff;
    box-shadow: 0 4px 14px rgba(0, 0, 0, 0.35);
}

.dialog-title {
    display: flex;
    align-items: center;
    box-sizing: border-box;
    height: 38px;
    padding: 0 15px 2px 10px;
    color: #111;
}

.dialog-icon {
    width: 18px;
    height: 21px;
    margin-right: 7px;
}

.close {
    margin-left: auto;
}

.close svg {
    width: 13px;
    height: 13px;
}

.dialog-body {
    flex: 1;
    min-height: 0;
    display: flex;
    flex-direction: column;
    padding: 2px 8px 0 6px;
    background: linear-gradient(90deg, #fff, #eee);
}

.info {
    display: flex;
    align-items: center;
    gap: 10px;
    height: 31px;
    padding-left: 2px;
}

.tabs {
    display: flex;
    align-items: flex-end;
    height: 35px;
}

.tab {
    height: 29px;
    padding: 0 9px;
    border: 1px solid #d5d5d5;
    border-width: 1px 1px 0 0;
    background: #f0f0f0;
}

.tab-on {
    height: 32px;
    padding: 0 10px;
    border-left-width: 1px;
    background: #fff;
}

.panel {
    flex: 1;
    min-height: 0;
    padding: 6px 4px 0 8px;
    border: 1px solid #d9d9d9;
    background: #fff;
}

.field {
    display: flex;
    align-items: center;
    gap: 7px;
    margin-bottom: 5px;
}

.text-box {
    box-sizing: border-box;
    width: 185px;
    height: 31px;
    padding: 0 4px;
    border: 1px solid #adadad;
    background: #fff;
}

.text-wide {
    flex: 1;
}

.nlgeom {
    height: 68px;
}

.radios {
    display: flex;
    flex-direction: column;
    gap: 12px;
    margin: 0 10px 0 9px;
}

.radios label, .check {
    display: flex;
    align-items: center;
    gap: 5px;
}

.radios input, .check input {
    appearance: none;
    box-sizing: border-box;
    width: 17px;
    height: 17px;
    margin: 0;
    border: 1px solid #333;
    background: #fff;
}

.radios input {
    border-radius: 50%;
}

.radios input:checked {
    background: radial-gradient(circle, #222 4px, #fff 5px);
}

.note {
    margin: 0;
    line-height: 22px;
}

.check {
    margin-top: 44px;
}

.dialog-buttons {
    display: flex;
    align-items: center;
    justify-content: space-around;
    box-sizing: border-box;
    height: 47px;
    padding: 3px 0 0;
}

.dialog-buttons button {
    width: 71px;
    height: 29px;
    border: 1px solid #adadad;
    background: #e1e1e1;
}

.ibeam {
    position: absolute;
    left: 133px;
    top: 147px;
    width: 8px;
    height: 18px;
}

/* Floating meter */
.meter {
    position: absolute;
    right: 27px;
    bottom: 99px;
    display: flex;
    align-items: center;
    box-sizing: border-box;
    width: 155px;
    height: 52px;
    padding: 0 5px 0 54px;
    border: 1px solid #ddd;
    border-radius: 26px;
    background: linear-gradient(#fdfdfd, #f0f0f0);
    box-shadow: 0 1px 4px rgba(0, 0, 0, 0.2);
}

.speeds {
    flex: 1;
    color: #111;
    font: 11px/20px "Noto Sans", sans-serif;
}

.speeds div {
    display: flex;
    align-items: center;
    justify-content: space-between;
}

.speeds svg {
    width: 9px;
    height: 9px;
}

.plus {
    width: 26px;
    height: 26px;
    margin-left: 8px;
}

.ball {
    position: absolute;
    left: -33px;
    top: -21px;
    width: 84px;
    height: 86px;
}

.percent {
    position: absolute;
    left: 20px;
    top: 31px;
    color: #555;
    font: 28px/28px "Lato", sans-serif;
}

.percent small {
    font-size: 14px;
}

.ppt {
    fill: #fff;
    font: bold 14px "Noto Sans", sans-serif;
}

/* Taskbar */
.taskbar {
    flex: none;
    display: flex;
    justify-content: space-between;
    height: 50px;
    background: linear-gradient(90deg, #24343d, #28343a 60%, #1e2d38);
    color: #fff;
}

.apps {
    display: flex;
}

.app-cut {
    width: 27px;
}

.app-cut svg {
    width: 10px;
    height: 32px;
}

.app {
    display: flex;
    align-items: center;
    justify-content: center;
    box-sizing: border-box;
    width: 52px;
    margin: 0 5px;
    padding-top: 3px;
    border-bottom: 3px solid transparent;
}

.app svg {
    width: 30px;
    height: 30px;
}

.running {
    border-bottom-color: #78aee0;
}

.active {
    width: 62px;
    margin: 0;
    background: #536065;
}

.tray {
    display: flex;
    align-items: center;
    gap: 10px;
}

.tray svg {
    width: 20px;
    height: 20px;
}

.tray .tray-red {
    width: 28px;
    height: 28px;
    margin-right: 16px;
}

.tray .sogou {
    margin-left: 10px;
}

.battery {
    display: flex;
    align-items: center;
    gap: 2px;
}

.battery svg {
    width: 14px;
    height: 22px;
}

.battery span {
    padding: 0 2px;
    border: 2px solid #fff;
    background: #1e8146;
    font-size: 13px;
    line-height: 16px;
}

.ime {
    font-size: 21px;
}

.clock {
    display: flex;
    flex-direction: column;
    align-items: flex-end;
    margin: 0 -1px 0 16px;
    line-height: 23px;
}
```
